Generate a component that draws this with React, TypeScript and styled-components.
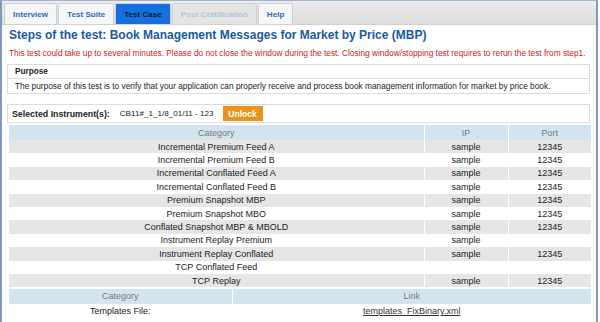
import React from 'react';
import styled, { createGlobalStyle } from 'styled-components';

const GlobalStyle = createGlobalStyle`
  html, body {
    margin: 0;
    padding: 0;
    background: #ffffff;
    font-family: "Liberation Sans", Arial, sans-serif;
  }
`;

const Frame = styled.div`
  width: 594px;
  height: 322px;
  overflow: hidden;
  border-left: 2px solid #7d9bc1;
  border-right: 2px solid #7d9bc1;
  border-top: 1px solid #9fb6d3;
  background: #ffffff;
`;

const TabBar = styled.ul`
  display: flex;
  align-items: flex-end;
  gap: 1px;
  margin: 0;
  padding: 2px 0 0 2px;
  height: 21px;
  list-style: none;
  background: linear-gradient(#ececec, #dcdcdc);
  border-bottom: 1px solid #d0d0d0;
`;

type TabKind = 'normal' | 'active' | 'disabled';

const Tab = styled.li<{ $kind: TabKind }>`
  display: flex;
  align-items: center;
  height: 20px;
  padding: 0 8px;
  font-size: 8.1px;
  font-weight: bold;
  border: 1px solid #cfcfcf;
  border-bottom: none;
  border-radius: 2px 2px 0 0;
  background: ${({ $kind }) =>
    $kind === 'active' ? '#1670e0' : $kind === 'disabled' ? '#e4e4e4' : '#f4f6f8'};
  color: ${({ $kind }) =>
    $kind === 'active' ? '#0b1e3a' : $kind === 'disabled' ? '#b6c3d4' : '#2e6db4'};
`;

const Content = styled.div`
  padding: 0 6px 0 5px;
`;

const Heading = styled.h1`
  margin: 2px 0 0 2px;
  font-size: 12px;
  line-height: 16px;
  font-weight: bold;
  color: #1b5a9e;
`;

const Warning = styled.p`
  margin: 5px 0 0 2px;
  font-size: 8.3px;
  line-height: 11px;
  color: #cc1a1a;
`;

const Box = styled.div`
  border: 1px solid #dcdcdc;
  margin-top: 5px;
`;

const BoxHead = styled.div`
  padding: 0 7px;
  height: 13px;
  display: flex;
  align-items: center;
  font-size: 8.2px;
  font-weight: bold;
  color: #222;
  border-bottom: 1px solid #dcdcdc;
`;

const BoxText = styled.div`
  padding: 0 7px;
  height: 14px;
  display: flex;
  align-items: center;
  font-size: 8.3px;
  color: #222;
`;

const InstrumentBox = styled.div`
  margin-top: 10px;
  height: 17px;
  border: 1px solid #dcdcdc;
  display: flex;
  align-items: center;
  padding: 0 4px;
  gap: 10px;
`;

const InstrumentLabel = styled.span`
  font-size: 8.8px;
  font-weight: bold;
  color: #222;
`;

const InstrumentValue = styled.span`
  font-size: 8.1px;
  color: #222;
`;

const UnlockButton = styled.button`
  height: 15px;
  width: 40px;
  padding: 0;
  margin-left: -1px;
  border: none;
  background: #e8931c;
  color: #ffffff;
  font-family: inherit;
  font-size: 8.5px;
  font-weight: bold;
`;

const Table = styled.table`
  width: 582px;
  margin-left: 2px;
  border-collapse: collapse;
  table-layout: fixed;
  font-size: 9px;
  color: #222;
`;

const HeadCell = styled.th`
  height: 15px;
  padding: 0;
  background: #d4e4ef;
  color: #7a7a7a;
  font-weight: normal;
  text-align: center;
  border-right: 1px solid #ffffff;
  &:last-child {
    border-right: none;
  }
`;

const Row = styled.tr<{ $shaded: boolean }>`
  background: ${({ $shaded }) => ($shaded ? '#e6e6e6' : '#ffffff')};
`;

const Cell = styled.td<{ $h?: number }>`
  height: ${({ $h }) => $h ?? 13.4}px;
  padding: 0;
  text-align: center;
  border-right: 1px solid #ffffff;
  &:last-child {
    border-right: none;
  }
`;

const FileLink = styled.a`
  color: #333;
  text-decoration: underline;
`;

const Spacer = styled.div<{ $h: number }>`
  height: ${({ $h }) => $h}px;
`;

const tabs: { label: string; kind: TabKind }[] = [
  { label: 'Interview', kind: 'normal' },
  { label: 'Test Suite', kind: 'normal' },
  { label: 'Test Case', kind: 'active' },
  { label: 'Post Certification', kind: 'disabled' },
  { label: 'Help', kind: 'normal' },
];

const feeds: [string, string, string][] = [
  ['Incremental Premium Feed A', 'sample', '12345'],
  ['Incremental Premium Feed B', 'sample', '12345'],
  ['Incremental Conflated Feed A', 'sample', '12345'],
  ['Incremental Conflated Feed B', 'sample', '12345'],
  ['Premium Snapshot MBP', 'sample', '12345'],
  ['Premium Snapshot MBO', 'sample', '12345'],
  ['Conflated Snapshot MBP & MBOLD', 'sample', '12345'],
  ['Instrument Replay Premium', 'sample', ''],
  ['Instrument Replay Conflated', 'sample', '12345'],
  ['TCP Conflated Feed', '', ''],
  ['TCP Replay', 'sample', '12345'],
];

export default function App() {
  return (
    <>
      <GlobalStyle />
      <Frame>
        <TabBar>
          {tabs.map((t) => (
            <Tab key={t.label} $kind={t.kind}>
              {t.label}
            </Tab>
          ))}
        </TabBar>
        <Content>
          <Heading>
            Steps of the test: Book Management Messages for Market by Price (MBP)
          </Heading>
          <Warning>
            This test could take up to several minutes. Please do not close the window
            during the test. Closing window/stopping test requires to rerun the test from
            step1.
          </Warning>
          <Box>
            <BoxHead>Purpose</BoxHead>
            <BoxText>
              The purpose of this test is to verify that your application can properly
              receive and process book management information for market by price book.
            </BoxText>
          </Box>
          <InstrumentBox>
            <InstrumentLabel>Selected Instrument(s):</InstrumentLabel>
            <InstrumentValue>CB11#_1_1/8_01/11 - 123</InstrumentValue>
            <UnlockButton>Unlock</UnlockButton>
          </InstrumentBox>
          <Spacer $h={2} />
          <Table>
            <colgroup>
              <col style={{ width: 415 }} />
              <col style={{ width: 84 }} />
              <col style={{ width: 83 }} />
            </colgroup>
            <thead>
              <tr>
                <HeadCell>Category</HeadCell>
                <HeadCell>IP</HeadCell>
                <HeadCell>Port</HeadCell>
              </tr>
            </thead>
            <tbody>
              {feeds.map(([name, ip, port], i) => (
                <Row key={name} $shaded={i % 2 === 0}>
                  <Cell>{name}</Cell>
                  <Cell>{ip}</Cell>
                  <Cell>{port}</Cell>
                </Row>
              ))}
            </tbody>
          </Table>
          <Spacer $h={1.5} />
          <Table>
            <colgroup>
              <col style={{ width: 223 }} />
              <col style={{ width: 359 }} />
            </colgroup>
            <thead>
              <tr>
                <HeadCell>Category</HeadCell>
                <HeadCell>Link</HeadCell>
              </tr>
            </thead>
            <tbody>
              <Row $shaded={false}>
                <Cell $h={15}>Templates File:</Cell>
                <Cell $h={15}>
                  <FileLink>templates_FixBinary.xml</FileLink>
                </Cell>
              </Row>
            </tbody>
          </Table>
        </Content>
      </Frame>
    </>
  );
}
